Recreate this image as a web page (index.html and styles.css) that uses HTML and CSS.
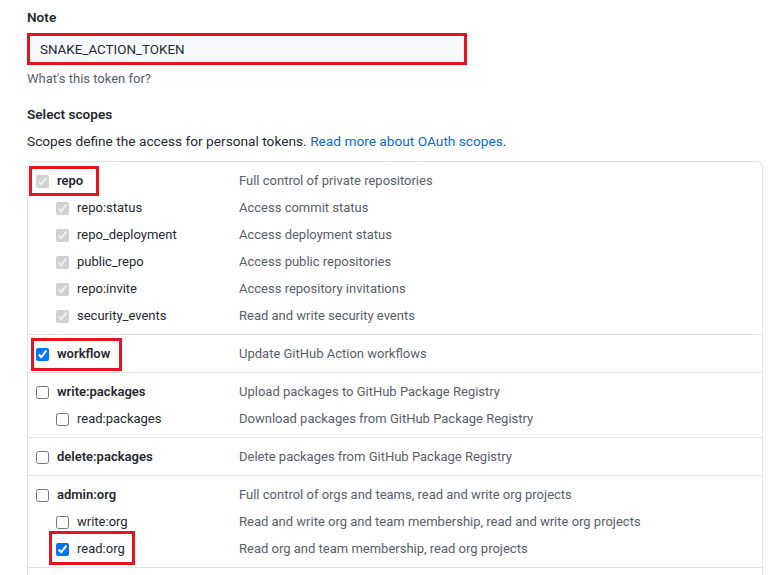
FILE: index.html
```html
<!DOCTYPE html>
<html lang="en">
<head>
<meta charset="utf-8">
<title>New personal access token</title>
<link rel="stylesheet" href="styles.css">
</head>
<body>
<main class="page">
  <label class="field-label" for="note">Note</label>
  <div class="note-field">
    <input id="note" class="note-input" type="text" value="SNAKE_ACTION_TOKEN">
  </div>
  <p class="hint">What's this token for?</p>

  <h3 class="section-title">Select scopes</h3>
  <p class="section-desc">Scopes define the access for personal tokens. <a href="#" class="link">Read more about OAuth scopes</a>.</p>

  <div class="scopes">
    <div class="group">
      <div class="row">
        <label class="opt"><input type="checkbox" checked disabled><span class="name top">repo</span><span class="mark mark-repo"></span></label>
        <span class="desc">Full control of private repositories</span>
      </div>
      <div class="row sub">
        <label class="opt"><input type="checkbox" checked disabled><span class="name">repo:status</span></label>
        <span class="desc">Access commit status</span>
      </div>
      <div class="row sub">
        <label class="opt"><input type="checkbox" checked disabled><span class="name">repo_deployment</span></label>
        <span class="desc">Access deployment status</span>
      </div>
      <div class="row sub">
        <label class="opt"><input type="checkbox" checked disabled><span class="name">public_repo</span></label>
        <span class="desc">Access public repositories</span>
      </div>
      <div class="row sub">
        <label class="opt"><input type="checkbox" checked disabled><span class="name">repo:invite</span></label>
        <span class="desc">Access repository invitations</span>
      </div>
      <div class="row sub">
        <label class="opt"><input type="checkbox" checked disabled><span class="name">security_events</span></label>
        <span class="desc">Read and write security events</span>
      </div>
    </div>

    <div class="group">
      <div class="row">
        <label class="opt"><input type="checkbox" checked><span class="name top">workflow</span><span class="mark mark-workflow"></span></label>
        <span class="desc">Update GitHub Action workflows</span>
      </div>
    </div>

    <div class="group">
      <div class="row">
        <label class="opt"><input type="checkbox"><span class="name top">write:packages</span></label>
        <span class="desc">Upload packages to GitHub Package Registry</span>
      </div>
      <div class="row sub">
        <label class="opt"><input type="checkbox"><span class="name">read:packages</span></label>
        <span class="desc">Download packages from GitHub Package Registry</span>
      </div>
    </div>

    <div class="group">
      <div class="row">
        <label class="opt"><input type="checkbox"><span class="name top">delete:packages</span></label>
        <span class="desc">Delete packages from GitHub Package Registry</span>
      </div>
    </div>

    <div class="group">
      <div class="row">
        <label class="opt"><input type="checkbox"><span class="name top">admin:org</span></label>
        <span class="desc">Full control of orgs and teams, read and write org projects</span>
      </div>
      <div class="row sub">
        <label class="opt"><input type="checkbox"><span class="name">write:org</span></label>
        <span class="desc">Read and write org and team membership, read and write org projects</span>
      </div>
      <div class="row sub">
        <label class="opt"><input type="checkbox" checked><span class="name">read:org</span><span class="mark mark-readorg"></span></label>
        <span class="desc">Read org and team membership, read org projects</span>
      </div>
    </div>

    <div class="group group-tail"></div>
  </div>
</main>
</body>
</html>
```

FILE: styles.css
```css
* { box-sizing: border-box; }

html, body {
  margin: 0;
  padding: 0;
  background: #ffffff;
}

body {
  font-family: Roboto, "Liberation Sans", sans-serif;
  font-size: 14px;
  color: #24292e;
  overflow: hidden;
}

.page {
  padding: 7px 0 0 27px;
  width: 763px;
}

.field-label {
  display: block;
  font-weight: 600;
  font-size: 13.6px;
  line-height: 20px;
  color: #24292e;
}

.note-field {
  margin-top: 6px;
  width: 440px;
  height: 32px;
  border: 3px solid #e5141f;
  background: #f6f8fa;
  display: flex;
  align-items: center;
}

.note-input {
  width: 100%;
  height: 100%;
  border: 0;
  outline: none;
  background: transparent;
  padding: 0 10px;
  font-family: inherit;
  font-size: 13.4px;
  color: #24292e;
}

.hint {
  margin: 5px 0 0;
  font-size: 13px;
  line-height: 18px;
  color: #586069;
}

.section-title {
  margin: 16px 0 0;
  font-size: 13.6px;
  font-weight: 600;
  line-height: 20px;
}

.section-desc {
  margin: 7px 0 0;
  font-size: 13.7px;
  line-height: 20px;
  color: #24292e;
}

.link {
  color: #0969da;
  text-decoration: none;
}

.scopes {
  margin-top: 10px;
  width: 736px;
  border: 1px solid #e1e4e8;
  border-radius: 6px;
}

.group {
  padding: 5px 0;
  border-top: 1px solid #e1e4e8;
}

.group:first-child {
  border-top: 0;
}

.group-tail {
  height: 40px;
}

.row {
  display: grid;
  grid-template-columns: 211px 1fr;
  height: 27px;
  align-items: center;
  padding-top: 1px;
  font-size: 13px;
}

.opt {
  position: relative;
  display: flex;
  align-items: center;
  gap: 8px;
  padding-left: 8px;
  height: 26px;
}

.row.sub .opt {
  padding-left: 28px;
}

.opt input {
  margin: 0;
  width: 13px;
  height: 13px;
  flex: none;
}

.name {
  line-height: 26px;
  color: #24292e;
  white-space: nowrap;
}

.name.top {
  font-weight: 600;
}

.desc {
  color: #586069;
  line-height: 26px;
  white-space: nowrap;
}

/* red annotation boxes drawn over the screenshot */
.mark {
  position: absolute;
  border: 3px solid #e5141f;
  pointer-events: none;
}

.mark-repo {
  left: 1px;
  top: -2px;
  width: 70px;
  height: 30px;
}

.mark-workflow {
  left: 3px;
  top: -3px;
  width: 91px;
  height: 33px;
}

.mark-readorg {
  left: 21px;
  top: -5px;
  width: 86px;
  height: 34px;
}
```
